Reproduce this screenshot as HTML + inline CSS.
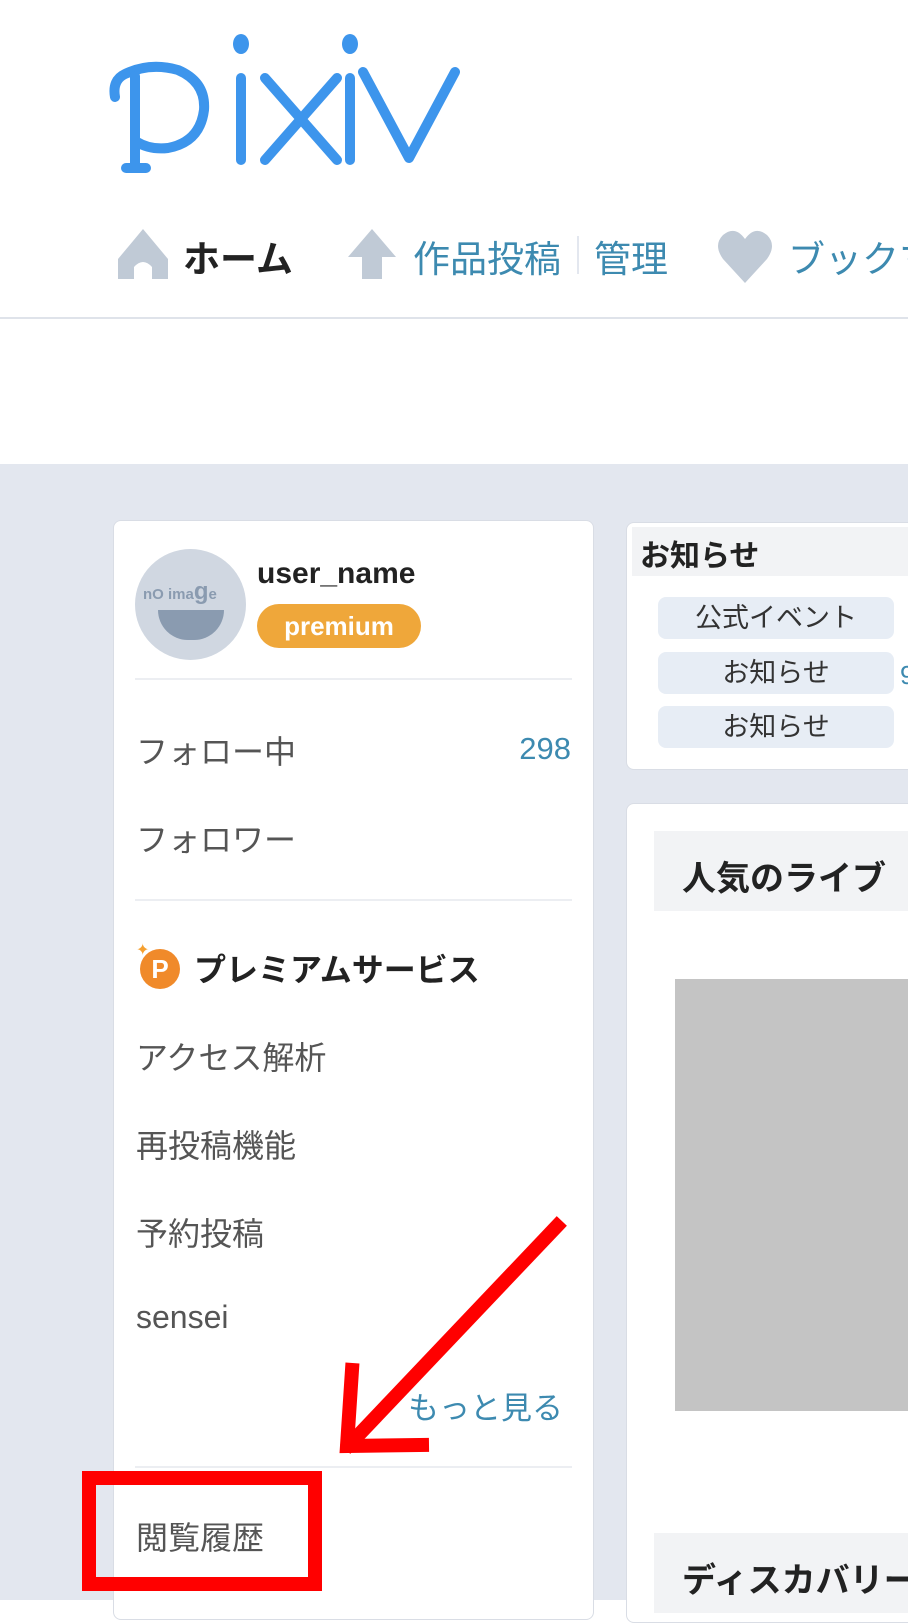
<!DOCTYPE html>
<html><head><meta charset="utf-8"><style>
*{margin:0;padding:0;box-sizing:border-box}
body{width:908px;height:1600px;overflow:hidden;background:#fff;font-family:"Liberation Sans","Noto Sans CJK JP",sans-serif;position:relative}
.abs{position:absolute}
.gray{left:0;top:464px;width:908px;height:1136px;background:#e3e7ef}
.card{background:#fff;border:1px solid #d9dde5;border-radius:8px}
.li{position:absolute;left:136px;font-size:32px;color:#555;white-space:nowrap}
.sep{position:absolute;left:135px;width:437px;height:2px;background:#eceef2}
.tag{position:absolute;left:658px;width:236px;height:42px;background:#e7edf5;border-radius:8px;font-size:27px;color:#333;text-align:center;line-height:42px}
</style></head><body>
<svg class="abs" style="left:0;top:0" width="470" height="180" viewBox="0 0 470 180">
<g fill="none" stroke="#3d95ec" stroke-width="10" stroke-linecap="round" stroke-linejoin="round">
<path d="M115 97 Q112 80 125 74 Q150 62 178 70 Q206 82 204 110 Q200 142 168 148 Q150 150 137 142"/>
<path d="M135 76 L135 168 M126 168 L146 168"/>
<path d="M241 78 L241 160"/>
<path d="M265 78 L337 160 M337 78 L265 160"/>
<path d="M350 78 L350 160"/>
<path d="M363 72 L409 158 L455 72"/>
</g>
<ellipse cx="241" cy="44" rx="8" ry="10" fill="#3d95ec"/><ellipse cx="350" cy="44" rx="8" ry="10" fill="#3d95ec"/>
</svg>
<svg class="abs" style="left:118px;top:229px" width="50" height="50" viewBox="0 0 50 50"><path d="M25 0 L50 30 L50 50 L34 50 L34 38 Q25 28 16 38 L16 50 L0 50 L0 30 Z" fill="#c0cad6"/></svg>
<div class="abs" style="left:183px;top:229px;font-size:37px;font-weight:bold;color:#222">ホーム</div>
<svg class="abs" style="left:348px;top:229px" width="48" height="50" viewBox="0 0 48 50"><path d="M24 0 L48 28 L34 28 L34 50 L14 50 L14 28 L0 28 Z" fill="#c0cad6"/></svg>
<div class="abs" style="left:413px;top:229px;font-size:37px;color:#3d8ab0">作品投稿</div>
<div class="abs" style="left:577px;top:236px;width:2px;height:38px;background:#e3e7ef"></div>
<div class="abs" style="left:594px;top:229px;font-size:37px;color:#3d8ab0">管理</div>
<svg class="abs" style="left:717px;top:229px" width="56" height="54" viewBox="0 0 56 54"><path d="M28 54 L6 30 Q-4 16 6 6 Q18 -4 28 10 Q38 -4 50 6 Q60 16 50 30 Z" fill="#c0cad6"/></svg>
<div class="abs" style="left:788px;top:229px;font-size:37px;color:#3d8ab0;white-space:nowrap">ブックマーク</div>
<div class="abs" style="left:0;top:317px;width:908px;height:2px;background:#dfe3ea"></div>
<div class="abs gray"></div>
<div class="abs card" style="left:113px;top:520px;width:481px;height:1100px"></div>
<div class="abs" style="left:135px;top:549px;width:111px;height:111px;border-radius:50%;background:#d0d7e1"></div>
<div class="abs" style="left:143px;top:578px;font-size:15px;font-weight:bold;color:#8a9bb0;white-space:nowrap">nO ima<span style="font-size:24px">g</span>e</div>
<div class="abs" style="left:158px;top:610px;width:66px;height:30px;border-radius:0 0 33px 33px;background:#8a9bb0"></div>
<div class="abs" style="left:257px;top:557px;font-size:30px;font-weight:bold;color:#222">user_name</div>
<div class="abs" style="left:257px;top:604px;width:164px;height:44px;border-radius:22px;background:#efa73a;color:#fff;font-size:26px;font-weight:bold;text-align:center;line-height:44px">premium</div>
<div class="sep" style="top:678px"></div>
<div class="li" style="top:727px">フォロー中</div>
<div class="abs" style="right:337px;top:731px;font-size:31px;color:#3d8ab0">298</div>
<div class="li" style="top:815px">フォロワー</div>
<div class="sep" style="top:899px"></div>
<div class="abs" style="left:140px;top:949px;width:40px;height:40px;border-radius:50%;background:#f08a2a;color:#fff;font-weight:bold;font-size:26px;text-align:center;line-height:40px">P</div>
<div class="abs" style="left:136px;top:940px;color:#f5a030;font-size:16px">✦</div>
<div class="abs" style="left:194px;top:945px;font-size:32px;font-weight:bold;color:#222">プレミアムサービス</div>
<div class="li" style="top:1033px">アクセス解析</div>
<div class="li" style="top:1121px">再投稿機能</div>
<div class="li" style="top:1209px">予約投稿</div>
<div class="li" style="top:1299px">sensei</div>
<div class="abs" style="left:408px;top:1383px;font-size:31px;color:#3d8ab0">もっと見る</div>
<div class="sep" style="top:1466px"></div>
<div class="li" style="top:1513px">閲覧履歴</div>
<div class="abs" style="left:82px;top:1471px;width:240px;height:120px;border:14px solid #f00"></div>
<svg class="abs" style="left:0;top:0" width="908" height="1600"><g stroke="#f00" stroke-width="14" fill="none" stroke-linecap="square"><path d="M557 1226 L350 1444"/><path d="M352 1370 L347 1446 L422 1445"/></g></svg>
<div class="abs card" style="left:626px;top:522px;width:300px;height:248px"></div>
<div class="abs" style="left:632px;top:527px;width:290px;height:49px;background:#f2f3f5"></div>
<div class="abs" style="left:640px;top:531px;font-size:30px;font-weight:bold;color:#222">お知らせ</div>
<div class="tag" style="top:597px">公式イベント</div>
<div class="tag" style="top:652px">お知らせ</div>
<div class="tag" style="top:706px">お知らせ</div>
<div class="abs" style="left:900px;top:660px;font-size:26px;color:#3d8ab0">9</div>
<div class="abs card" style="left:626px;top:803px;width:300px;height:820px"></div>
<div class="abs" style="left:654px;top:831px;width:260px;height:80px;background:#f2f3f5"></div>
<div class="abs" style="left:682px;top:851px;font-size:34px;font-weight:bold;color:#222;white-space:nowrap">人気のライブ</div>
<div class="abs" style="left:675px;top:979px;width:240px;height:432px;background:#c4c4c4"></div>
<div class="abs" style="left:654px;top:1533px;width:260px;height:80px;background:#f2f3f5"></div>
<div class="abs" style="left:682px;top:1553px;font-size:34px;font-weight:bold;color:#222;white-space:nowrap">ディスカバリー</div>
</body></html>
